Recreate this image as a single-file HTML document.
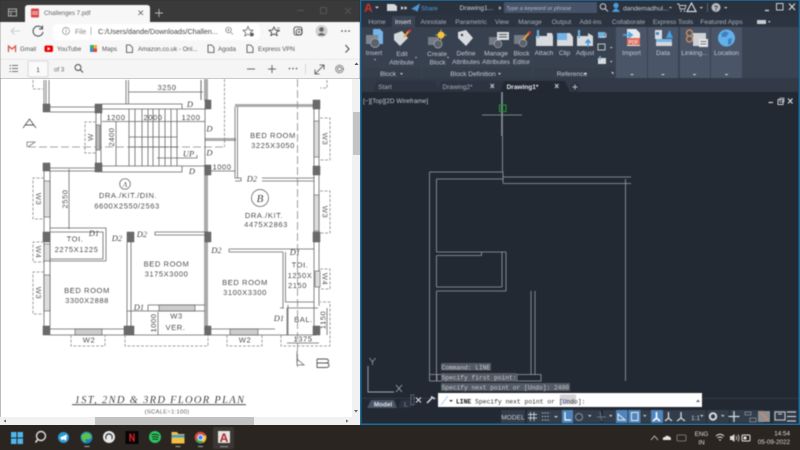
<!DOCTYPE html>
<html><head><meta charset="utf-8"><style>
html,body{margin:0;padding:0;width:800px;height:450px;overflow:hidden;background:#222933}
svg{display:block;font-family:"Liberation Sans",sans-serif}
.soft{filter:blur(.4px)}
.p text{font-size:7.6px;fill:#222;text-anchor:middle;letter-spacing:.55px;stroke:#fff;stroke-width:.1px}
.p text.i{font-family:"Liberation Serif",serif;font-style:italic;font-size:8.5px;letter-spacing:0}
.w{fill:none;stroke:#666;stroke-width:.8}
.g{fill:#aaa;stroke:none}
.c{fill:#6a6a6a;stroke:#444;stroke-width:.4}
.d{fill:none;stroke:#888;stroke-width:.8;stroke-dasharray:3 1.5}
.r text{font-size:6.6px;fill:#c4cad2;text-anchor:middle}
.t text{font-size:6.5px;fill:#a9b0ba;text-anchor:middle}
.l{fill:none;stroke:#9aa0a8;stroke-width:.8}
.b text{font-size:6.2px;fill:#555}
</style></head><body>
<svg width="800" height="450" viewBox="0 0 800 450" xmlns="http://www.w3.org/2000/svg">
<g class="soft">
<!-- BROWSER -->
<rect x="0" y="0" width="360" height="22" fill="#3a3a3a"/>
<path d="M25 22V8q0-3 3-3H147q3 0 3 3V22Z" fill="#f7f7f7"/>
<rect x="8.500" y="9" width="8" height="7" fill="none" stroke="#bbb" stroke-width=".9"/><path d="M8.500 11.500H16.500M11 11.500V16" stroke="#bbb" stroke-width=".8"/>
<rect x="31" y="8.500" width="8" height="9" rx="1" fill="#d84a4a"/><path d="M32 12H38M32 14H38" stroke="#fff" stroke-width=".7"/>
<text x="44" y="15" font-size="6.200" fill="#666">Challenges 7.pdf</text>
<path d="M138.500 10.500L143 15M143 10.500L138.500 15" stroke="#555" stroke-width=".8"/>
<path d="M155 13H163M159 9V17" stroke="#bbb" stroke-width=".9"/>
<path d="M297 10.500H304" stroke="#555"/><rect x="320.500" y="7.500" width="6" height="6" fill="none" stroke="#555"/><path d="M345 8L351 14M351 8L345 14" stroke="#555"/>
<rect x="0" y="22" width="360" height="21" fill="#f7f7f7"/>
<path d="M11 31H20M11 31L14.500 27.500M11 31L14.500 34.500" stroke="#ccc" fill="none"/>
<path d="M42 28A5 5 0 1 0 43 32M42.500 25.500V29H39" stroke="#444" fill="none"/>
<rect x="53" y="24" width="207" height="16" rx="4" fill="#fff"/>
<circle cx="66" cy="31" r="3.500" fill="none" stroke="#888" stroke-width=".7"/><path d="M66 30V33M66 28.800V29.500" stroke="#888" stroke-width=".7"/>
<text x="75" y="34" font-size="7" fill="#888">File</text><path d="M91 27V35" stroke="#888" stroke-width=".6"/>
<text x="98" y="34" font-size="7.200" fill="#444">C:/Users/dande/Downloads/Challen...</text>
<circle cx="228.500" cy="30" r="2.800" fill="none" stroke="#777" stroke-width=".7"/><path d="M231 32.500L233 34.500M227 30H230M228.500 28.500V31.500" stroke="#777" stroke-width=".6"/>
<path d="M248 26.500L249.500 30L253 30.300L250.300 32.500L251.200 36L248 34L244.800 36L245.700 32.500L243 30.300L246.500 30Z" fill="none" stroke="#555" stroke-width=".7"/><circle cx="252" cy="34.500" r="1.800" fill="#555"/>
<path d="M274 27L275.500 30L279 30.300L276.300 32.500L277.200 35.500L274 34L270.800 35.500L271.700 32.500L269 30.300L272.500 30Z" fill="none" stroke="#333" stroke-width=".8"/><path d="M277 28H280M277 31H280" stroke="#333" stroke-width=".6"/>
<rect x="294" y="27" width="8" height="8" rx="2" fill="none" stroke="#333" stroke-width=".8"/><circle cx="299" cy="32" r="3" fill="#f7f7f7" stroke="#333" stroke-width=".8"/><path d="M299 30.500V33.500M297.500 32H300.500" stroke="#333" stroke-width=".6"/>
<circle cx="321.500" cy="31" r="6" fill="#d0d0d0"/><circle cx="321.500" cy="29.500" r="2.300" fill="#666"/><path d="M317.500 35.500Q321.500 30.500 325.500 35.500Z" fill="#666"/>
<circle cx="342" cy="31" r=".8" fill="#333"/><circle cx="345.500" cy="31" r=".8" fill="#333"/><circle cx="349" cy="31" r=".8" fill="#333"/>
<rect x="0" y="43" width="360" height="16" fill="#f7f7f7"/>
<path d="M8.500 52V46L12 49L15.500 46V52" fill="none" stroke="#d9503f" stroke-width="1.300"/>
<rect x="44.500" y="45.500" width="8.500" height="6.500" rx="1.500" fill="#e00"/><path d="M47.500 47L50.500 48.700L47.500 50.500Z" fill="#fff"/>
<rect x="90" y="45" width="3.500" height="3.500" fill="#3a8"/><rect x="93.500" y="45" width="3.500" height="3.500" fill="#e8b030"/><rect x="90" y="48.500" width="3.500" height="3.500" fill="#48c"/><rect x="93.500" y="48.500" width="3.500" height="3.500" fill="#d44"/>
<path d="M126.500 45H130L132.500 47.500V52.500H126.500Z" fill="none" stroke="#444" stroke-width=".8"/>
<path d="M208 45H211.500L214 47.500V52.500H208Z" fill="none" stroke="#444" stroke-width=".8"/>
<path d="M247 45H250.500L253 47.500V52.500H247Z" fill="none" stroke="#444" stroke-width=".8"/>
<g class="b"><text x="20" y="51">Gmail</text><text x="57" y="51">YouTube</text><text x="102" y="51">Maps</text><text x="138" y="51">Amazon.co.uk - Onl...</text><text x="218" y="51">Agoda</text><text x="258" y="51">Express VPN</text></g>
<path d="M345.500 45L349 49L345.500 52.500" fill="none" stroke="#444"/>
<rect x="0" y="59" width="360" height="20" fill="#f5f5f5"/><rect x="0" y="59" width="360" height=".6" fill="#e2e2e2"/>
<path d="M12 65.500H18M12 68.500H18M12 71.500H18" stroke="#444" stroke-width=".8"/><path d="M9.500 65.500H11M9.500 68.500H11M9.500 71.500H11" stroke="#444" stroke-width=".8"/>
<rect x="28" y="61" width="20" height="16" rx="1.500" fill="#fafafa" stroke="#ccc" stroke-width=".7"/>
<text x="38" y="72" font-size="6.500" fill="#444" text-anchor="middle">1</text>
<text x="54" y="71.500" font-size="6.200" fill="#666">of 3</text>
<circle cx="78" cy="67.500" r="3" fill="none" stroke="#444" stroke-width=".9"/><path d="M80.200 69.700L83 72.500" stroke="#444"/>
<path d="M247 69H255" stroke="#666"/><path d="M268 69H276M272 65V73" stroke="#666"/>
<circle cx="289.500" cy="68.500" r=".8" fill="#444"/><circle cx="293" cy="68.500" r=".8" fill="#444"/><circle cx="296.500" cy="68.500" r=".8" fill="#444"/>
<path d="M305.500 64V74" stroke="#ccc" stroke-width=".7"/>
<path d="M315 74L323.500 65.500M319.500 65H324V69.500M315 69.500V74H319.500" fill="none" stroke="#444" stroke-width=".8"/>
<circle cx="339.500" cy="69" r="2" fill="none" stroke="#444" stroke-width=".7"/><circle cx="339.500" cy="69" r="3.800" fill="none" stroke="#444" stroke-width=".9" stroke-dasharray="1.500 .7"/>
</g>
<!-- PDF PAGE -->
<rect x="0" y="79" width="352" height="338" fill="#fff"/>
<rect x="0" y="79" width="1" height="346" fill="#bbb"/>
<g class="soft p">
<rect class="g" x="204" y="79" width="4" height="22"/><rect class="g" x="204" y="165" width="4" height="170"/>
<rect class="g" x="235" y="104" width="80" height="3"/><rect class="g" x="205" y="138" width="31" height="3"/>
<path class="d" d="M33 80V89H43M327 80V88H320M224.500 79V140M224.500 140V147"/>
<path class="d" d="M297.500 79V367M28 147H224" style="stroke-dasharray:8 3"/>
<path class="w" d="M44 80V106M49 80V106M46 80V106M126 80V104M128.500 80V104M201 80V100M50 107H96M50 112H96M102 104H182V109H102M102 109H205"/>
<path class="w" d="M129 92H203M201 80V100"/>
<path class="w" d="M129 109V166M135 109V166M142 109V166M148 109V166M153 109V166M159 109V166M165 109V166M171 109V166M177 109V166M129 137H177M129 147H177M102 121.500H205M116 121V166M157 158H197V155"/>
<path class="w" d="M96 113V163M101 113V163M102 166H205M102 172H182V166M50 168H95M50 171H95M205 109V166"/>
<rect x="96" y="125" width="4" height="25" fill="#bbb" stroke="#555" stroke-width=".6"/>
<path class="d" d="M96 122H85V153H96"/>
<path class="c" d="M43 104h7v8h-7zM95 104h7v9h-7zM205 100h6v9h-6zM95 163h7v9h-7zM43 163h7v8h-7zM205 165h6v10h-6zM313 100h7v9h-7zM313 166h7v9h-7zM313 232h7v10h-7zM43 232h7v10h-7zM127 232h7v10h-7zM43 326h7v9h-7zM124 326h10v9h-10zM205 326h6v9h-6zM313 326h7v9h-7zM205 232h6v10h-6z"/>
<path class="w" d="M235 107V178H241V181H235M237.500 107V178M262 178H314V181H262M314 109V166M319 109V166M314 175V232M319 175V232M314 242V326M319 242V306M211 171H235"/>
<path class="w" d="M208 232H155V235H208M44 171V326M50 171V326M50 228H106V261M50 232H103V259H50M106 261H50M127 242V326M131 242V326M50 329H124M50 335H316"/>
<path class="w" d="M69 169V229M229 249H314M229 252H283M229 249V252M283 252V308M285.500 252V302H314M288 305V335M318 308H287V335M280 308H284M275 329H204M148 305H205M148 311H205M127 311H148M148 305V311M158 312V335"/>
<rect x="159" y="305" width="36" height="6" fill="#ccc" stroke="#555" stroke-width=".6"/>
<rect x="75" y="329" width="27" height="6" fill="#ccc" stroke="#555" stroke-width=".6"/>
<rect x="230" y="329" width="28" height="6" fill="#ccc" stroke="#555" stroke-width=".6"/>
<rect x="44" y="181" width="6" height="36" fill="#ddd" stroke="#555" stroke-width=".6"/>
<rect x="44" y="275" width="6" height="36" fill="#ddd" stroke="#555" stroke-width=".6"/>
<rect x="44" y="244" width="6" height="17" fill="#ddd" stroke="#555" stroke-width=".6"/>
<rect x="314" y="121" width="5" height="36" fill="#ddd" stroke="#555" stroke-width=".6"/>
<rect x="314" y="195" width="5" height="36" fill="#ddd" stroke="#555" stroke-width=".6"/>
<rect x="315" y="271" width="5" height="16" fill="#ddd" stroke="#555" stroke-width=".6"/>
<path class="d" d="M320 118H330V160H320M320 191H330V233H320M320 269H330V289H320M44 178H33V219H44M44 242H33V262H44M44 272H33V314H44M71 335V346H105V335M125 335V346H208V335M227 335V346H262V335M281 335V346H330V302H320"/>
<path class="w" d="M287 343H319M327 308V335M297 351V365H304L297 359"/>
<path d="M23 128L29.500 119L36 128M25.500 125H33.500" fill="none" stroke="#555" stroke-width=".9"/>
<path d="M27 147V142H35L28 147" fill="none" stroke="#777" stroke-width=".8"/>
<path d="M317 359H326Q328.500 359 328.500 361Q328.500 363 326 363H317M326 363Q329 363 329 365Q329 367.500 326 367.500H317V359" fill="none" stroke="#555" stroke-width=".9"/>
<circle cx="125" cy="184" r="5.300" fill="none" stroke="#555" stroke-width=".7"/>
<circle cx="260" cy="198" r="8.500" fill="none" stroke="#555" stroke-width=".7"/>
<text x="167" y="90">3250</text><text x="116" y="120">1200</text><text x="153" y="120">2000</text><text x="191" y="120">1200</text><text x="222" y="169.500">1000</text>
<text x="273" y="138">BED ROOM</text><text x="273" y="148">3225X3050</text>
<text x="128" y="198">DRA./KIT./DIN.</text><text x="127" y="208.500">6600X2550/2563</text>
<text x="264" y="218">DRA./KIT.</text><text x="266" y="227">4475X2863</text>
<text x="75" y="241.500">TOI.</text><text x="76.500" y="252">2275X1225</text>
<text x="166.500" y="266.500">BED ROOM</text><text x="166.500" y="276.500">3175X3000</text>
<text x="245" y="285">BED ROOM</text><text x="245" y="295">3100X3300</text>
<text x="87" y="293">BED ROOM</text><text x="87" y="303">3300X2888</text>
<text x="300" y="267.500">TOI.</text><text x="300" y="278">1250X</text><text x="297.500" y="288">2150</text>
<text x="303.500" y="322">BAL.</text><text x="176.500" y="318.500">W3</text><text x="175.500" y="330">VER.</text>
<text x="89" y="342.500">W2</text><text x="245" y="342.500">W2</text><text x="303" y="341.500">1375</text>
<g style="font-size:7px"><text transform="translate(114,137) rotate(-90)">2400</text><text transform="translate(67.500,199) rotate(-90)">2550</text><text transform="translate(156,323) rotate(-90)">1000</text><text transform="translate(325.500,320) rotate(-90)">1150</text></g>
<text transform="translate(93,137) rotate(-90)">W</text>
<text transform="translate(36,199) rotate(90)">W3</text><text transform="translate(36,293) rotate(90)">W3</text><text transform="translate(36,252) rotate(90)">W4</text>
<text transform="translate(322.500,139) rotate(90)">W3</text><text transform="translate(322.500,212) rotate(90)">W3</text><text transform="translate(322.500,279) rotate(90)">W4</text>
<text class="i" x="190" y="107">D</text><text class="i" x="209.500" y="131.500">D</text><text class="i" x="209.500" y="155.500">D</text><text class="i" x="192" y="174">D</text><text class="i" x="188.500" y="156.500">UP</text>
<text class="i" x="125" y="187" style="font-size:7px">A</text><text class="i" x="260" y="202" style="font-size:11px">B</text>
<text class="i" x="252" y="181.500">D2</text><text class="i" x="94" y="236">D1</text><text class="i" x="117" y="241">D2</text><text class="i" x="142" y="237">D2</text><text class="i" x="216.500" y="253">D2</text><text class="i" x="295" y="255">D1</text><text class="i" x="139" y="310">D1</text><text class="i" x="279" y="321">D1</text>
<text x="160" y="403" style="font-family:'Liberation Serif',serif;font-style:italic;font-size:10.500px;letter-spacing:1.300px">1ST,  2ND  &amp;  3RD  FLOOR  PLAN</text>
<path d="M72 404.700H246" stroke="#333" stroke-width=".9"/>
<text x="167" y="413.500" style="font-size:5.800px;letter-spacing:.3px">(SCALE=1:100)</text>
</g>
<!-- scrollbars -->
<rect x="352" y="79" width="8" height="346" fill="#f1f1f1"/>
<rect x="353" y="112" width="7" height="43" fill="#c4c4c4"/>
<path d="M354.500 65L356.500 62.500L358.500 65Z" fill="#555"/><path d="M354 410L356 412.500L358 410Z" fill="#666"/>
<rect x="0" y="417" width="352" height="8" fill="#f1f1f1"/><rect x="95" y="417" width="159" height="8" fill="#c2c2c2"/>
<path d="M6 419.500L3.500 421L6 422.500Z" fill="#666"/><path d="M346 419.500L348.500 421L346 422.500Z" fill="#666"/>
<!-- AUTOCAD -->
<rect x="360" y="0" width="440" height="425" fill="#222933"/>
<rect x="360" y="0" width="1.500" height="425" fill="#1b6d9e"/><rect x="360" y="423.500" width="440" height="1.500" fill="#1b6d9e"/><rect x="360" y="0" width="440" height="1" fill="#1b6d9e"/><rect x="798.500" y="0" width="1.500" height="425" fill="#1b6d9e"/>
<g class="soft">
<rect x="361.500" y="1" width="437" height="14" fill="#2a323e"/>
<text x="364" y="12" font-size="12" font-weight="bold" fill="#c8352c">A</text>
<path d="M375 6.500H379L377 8.800Z" fill="#ccc"/>
<path d="M387 4H394L397 6V11H387Z" fill="#d5d8dc"/>
<path d="M401 6L404 8L401 10ZM404.500 6L407.500 8L404.500 10Z" fill="#ccc"/>
<path d="M411 9L420 3.500L417.500 12L415 9.500L414 12V9.500Z" fill="#4d9ad8"/>
<text x="421" y="10.300" font-size="6.300" fill="#4d9ad8">Share</text>
<text x="459.500" y="10" font-size="6.700" fill="#cfd3d9">Drawing1...</text>
<path d="M499 6L501.500 8L499 10Z" fill="#bbb"/>
<rect x="504" y="2" width="93" height="11" fill="#465369"/>
<text x="506" y="10" font-size="5.700" font-style="italic" fill="#b6bcc6">Type a keyword or phrase</text>
<circle cx="603" cy="6.500" r="2.800" fill="none" stroke="#ccc"/><path d="M605 8.500L608 11.500" stroke="#ccc" stroke-width="1.100"/>
<circle cx="616" cy="5.500" r="2.700" fill="#4d9ad8"/><path d="M612 12Q616 5 620 12Z" fill="#4d9ad8"/>
<text x="623" y="10.300" font-size="6.600" fill="#c9cdd3">dandemadhul...</text>
<path d="M669 7H672L670.500 8.500Z" fill="#ccc"/>
<path d="M677 4H679L680 9H685L686 5.500H680" fill="none" stroke="#ccc" stroke-width=".9"/><circle cx="681" cy="11" r=".8" fill="#ccc"/><circle cx="684.500" cy="11" r=".8" fill="#ccc"/>
<path d="M691.500 3L696 11.500H687Z" fill="none" stroke="#d5d8dc" stroke-width="1.200"/>
<path d="M699.500 7H703L701.300 8.800Z" fill="#ccc"/><path d="M707.500 3V12" stroke="#5a6472"/>
<circle cx="716" cy="7.500" r="4.500" fill="#b8bcc2"/><text x="716" y="10.300" font-size="7" font-weight="bold" fill="#2a323e" text-anchor="middle">?</text>
<path d="M724 7H727.500L725.800 8.800Z" fill="#ccc"/>
<path d="M765 10.500H769" stroke="#ddd" stroke-width="1.300"/><rect x="776.500" y="3.500" width="6.500" height="6.500" fill="none" stroke="#ddd" stroke-width=".9"/><path d="M789 3.500L795 10M795 3.500L789 10" stroke="#ddd" stroke-width="1.100"/>
<!-- ribbon tabs -->
<rect x="361.500" y="15" width="437" height="12" fill="#2c3441"/>
<rect x="392" y="16" width="23" height="11" fill="#3b4453"/>
<g class="t"><text x="377" y="24">Home</text><text x="403" y="24" style="fill:#e4e7ea">Insert</text><text x="433.500" y="24">Annotate</text><text x="471" y="24">Parametric</text><text x="502" y="24">View</text><text x="530" y="24">Manage</text><text x="561.500" y="24">Output</text><text x="590.500" y="24">Add-ins</text><text x="628.500" y="24">Collaborate</text><text x="673" y="24">Express Tools</text><text x="721.500" y="24">Featured Apps</text></g>
<rect x="757" y="20" width="9" height="4" fill="#c8cbd0"/><path d="M768 21H770.500L769.200 23Z" fill="#ccc"/>
<!-- ribbon -->
<rect x="361.500" y="27" width="437" height="51" fill="#3a4351"/>
<rect x="363" y="27" width="58" height="51" fill="#38414f"/><rect x="421.500" y="27" width="110.500" height="51" fill="#38414f"/><rect x="533" y="27" width="82" height="51" fill="#38414f"/>
<rect x="363" y="68" width="58" height="10" fill="#353e4b"/><rect x="423" y="68" width="109" height="10" fill="#353e4b"/><rect x="533" y="68" width="82" height="10" fill="#353e4b"/>
<rect x="616" y="27" width="31" height="51" fill="#4a5568"/><rect x="648" y="27" width="30" height="51" fill="#4a5568"/><rect x="680" y="27" width="30" height="51" fill="#4a5568"/><rect x="711" y="27" width="31" height="51" fill="#4a5568"/>
<!-- ribbon icons -->
<path d="M373 29H380L383 32V44H373Z" fill="#74b4e8"/>
<rect x="366" y="35" width="12" height="9" fill="#7e858e"/><circle cx="375" cy="43" r="4.500" fill="#5b626c" stroke="#aab0b8" stroke-width=".7"/>
<path d="M394 34L402 31L408 38L400 46L394 40Z" fill="#d4d7db"/><path d="M404 37L409 31" stroke="#f0a030" stroke-width="1.800"/><circle cx="409.500" cy="31" r="1.500" fill="#e33"/>
<rect x="428" y="37" width="11" height="8" fill="#747b85"/><circle cx="438" cy="44" r="4" fill="#5b626c" stroke="#aab0b8" stroke-width=".7"/><circle cx="441" cy="35" r="3.500" fill="#f5c542"/><path d="M441 29.500V40.500M435.500 35H446.500" stroke="#f5c542" stroke-width=".7"/>
<path d="M458 32L466 30L473 38L466 46L458 38Z" fill="#d8dbdf"/><circle cx="462" cy="35" r="1.200" fill="#38414f"/>
<rect x="489" y="37" width="11" height="8" fill="#747b85"/><circle cx="498" cy="44" r="3.800" fill="#5b626c" stroke="#aab0b8" stroke-width=".7"/><rect x="497" y="32" width="12" height="8" fill="#d8dbdf"/><path d="M499 34.500H507M499 37H507" stroke="#555"/>
<rect x="514" y="35" width="12" height="9" fill="#747b85"/><circle cx="523" cy="43" r="3.800" fill="#5b626c" stroke="#aab0b8" stroke-width=".7"/><path d="M523 40L529 33" stroke="#f0a030" stroke-width="1.800"/><circle cx="529.500" cy="32.500" r="1.400" fill="#e33"/>
<path d="M536 36H547V33H552L553 36V46H536Z" fill="#d7dade"/><path d="M538 30V38" stroke="#6fb0e0" stroke-width="2.200"/>
<path d="M557 33H570L573 37V46H557Z" fill="#d7dade"/><rect x="557" y="33" width="10" height="7" fill="#72b3e8"/>
<path d="M577 36H588V33L593 36V46H577Z" fill="#d7dade"/><path d="M579 30V38" stroke="#6fb0e0" stroke-width="2.200"/><path d="M588 47V41M585.500 43L588 40L590.500 43" stroke="#3f93d8" stroke-width="1.400" fill="none"/>
<path d="M598 32H605V38H598Z" fill="#73b0e0"/><path d="M600 37H606V33" stroke="#c9cdd2" fill="none"/>
<rect x="598" y="44" width="7" height="6" fill="none" stroke="#c0c5cb"/>
<rect x="598" y="58" width="8" height="6" fill="#d7dade"/><path d="M600 56V60" stroke="#6fb0e0" stroke-width="1.500"/>
<path d="M610 47H612.500L611.200 48.500ZM610 61H612.500L611.200 62.500Z" fill="#ddd"/>
<path d="M627 29H636L640 33V46H627Z" fill="#e8e8ea"/><rect x="627" y="38" width="13" height="7" fill="#e16a5a"/><path d="M623 35H631M628 32L632 35L628 38" stroke="#4ba4e6" stroke-width="1.700" fill="none"/>
<text x="633.500" y="44" font-size="5" fill="#fff" text-anchor="middle">PDF</text>
<rect x="655" y="30" width="7" height="9" fill="#d9dce0"/><rect x="656" y="32" width="3" height="3" fill="#4c88c0"/><path d="M669.500 30L673 38H666Z" fill="#4b9ee0"/><rect x="656" y="39" width="16" height="3" fill="#74b4e8"/><rect x="656" y="42" width="16" height="4" fill="#d4d7db"/>
<rect x="693" y="33" width="13" height="13" fill="#cfd2d6"/><rect x="699" y="39" width="9" height="8" fill="#e4e6e9"/><path d="M700.500 41.500H706.500M700.500 44H706.500" stroke="#555" stroke-width=".7"/>
<circle cx="689.500" cy="33" r="3" fill="none" stroke="#c58b62" stroke-width="1.500"/><circle cx="689.500" cy="39" r="3" fill="none" stroke="#c58b62" stroke-width="1.500"/>
<circle cx="726.500" cy="38" r="8.500" fill="#63b1ea"/><path d="M721 34L725 31L729 33L726 37L722 37ZM728 39L732 38L731 44L728 45Z" fill="#3e83bf"/>
<g class="r">
<text x="374" y="55">Insert</text><text x="402" y="56">Edit</text><text x="401.500" y="64.500">Attribute</text>
<text x="437" y="56">Create</text><text x="437.500" y="64.500">Block</text><text x="466" y="55.500">Define</text><text x="466" y="64">Attributes</text><text x="496" y="55.500">Manage</text><text x="496" y="64">Attributes</text><text x="521.500" y="55.500">Block</text><text x="521.500" y="64">Editor</text>
<text x="544" y="55">Attach</text><text x="564.500" y="55">Clip</text><text x="585" y="55">Adjust</text>
<text x="631.500" y="55">Import</text><text x="663" y="55">Data</text><text x="694.500" y="55">Linking...</text><text x="726.500" y="55">Location</text>
<text x="388" y="76">Block</text><text x="473" y="76">Block Definition</text><text x="572" y="76">Reference</text>
</g>
<path d="M374 59H376L375 60.500ZM415 57H417L416 58.500ZM447 57H449L448 58.500ZM400 73H403L401.500 75ZM498 73H501L499.500 75ZM584 73H587L585.500 75ZM630 74H634L632 75.500ZM661 74H665L663 75.500ZM692.500 74H696.500L694.500 75.500ZM724.500 74H728.500L726.500 75.500ZM611 72H613.500V74.500Z" fill="#ccd0d5"/>
<!-- file tabs -->
<rect x="361.500" y="78" width="437" height="14" fill="#323a47"/>
<path d="M373 92L377 81H435L439 92Z" fill="#2c3441"/>
<path d="M437 92L441 81H503L507 92Z" fill="#2c3441"/>
<path d="M500 92L504 81H565L570 92Z" fill="#222933"/>
<g class="t"><text x="385" y="89">Start</text><text x="457.500" y="89">Drawing2*</text><text x="522.500" y="89" style="fill:#e3e6ea;font-weight:bold">Drawing1*</text></g>
<path d="M490.500 84L494 88M494 84L490.500 88M555 84L558.500 88M558.500 84L555 88" stroke="#c6cad0"/>
<circle cx="575" cy="87" r="5" fill="#2c3441"/><path d="M572.500 87H577.500M575 84.500V89.500" stroke="#bbb"/>
<!-- viewport labels -->
<text x="363" y="103" font-size="6.500" fill="#c4c8ce">[−][Top][2D Wireframe]</text>
<path d="M768.500 102.500H773" stroke="#c9cdd2" stroke-width="1.200"/><rect x="778" y="99.500" width="5" height="5" fill="none" stroke="#c9cdd2"/><rect x="780" y="98" width="4" height="4" fill="none" stroke="#c9cdd2" stroke-width=".7"/><path d="M788 98.500L792.500 103.500M792.500 98.500L788 103.500" stroke="#ddd" stroke-width="1.100"/>
<!-- drawing -->
<path class="l" d="M482 115H522M502.500 136V172M429.500 172H503M429.500 172V381M436.500 179H503M436.500 179V252M503 172V183M503 177H631M503 183.500H631M625.500 179V381M436.500 252H506M436.500 255.500H481.500V252M436.500 255.500V287M502 252V287M436.500 287H502M506 252V291M436.500 291H506M436.500 291V381M531 291V375M535 291V375M429.500 374.500H541V381H429.500M437 374.500V381M517 374.500V381"/>
<path d="M502 92V136" stroke="#8e949c" stroke-width="1.600"/>
<rect x="499.500" y="105" width="6.500" height="6.500" fill="none" stroke="#1a9a2a" stroke-width="1.100"/>
<path d="M368 366V392H394" fill="none" stroke="#a5abb3" stroke-width=".9"/>
<path d="M369.500 358L372.500 362L375.500 358M372.500 362V365" fill="none" stroke="#9aa0a8" stroke-width=".8"/><path d="M396 385L402 392M402 385L396 392" stroke="#9aa0a8" stroke-width=".9"/>
<!-- command -->
<rect x="441" y="363" width="50" height="7.500" fill="#555b64"/><rect x="441" y="373" width="76" height="8" fill="#555b64"/><rect x="441" y="383" width="129" height="8" fill="#555b64"/>
<g font-family="Liberation Mono" font-size="6.250" fill="#c8ccd1"><text x="441.500" y="369.300">Command: LINE</text><text x="441.500" y="379.500">Specify first point:</text><text x="441.500" y="389.500">Specify next point or [Undo]: 2400</text></g>
<rect x="361.500" y="398" width="437" height=".7" fill="#3a4351"/>
<path d="M367 408L371 400H394L397 408Z" fill="#4a5568"/><text x="383" y="406.500" font-size="6.300" font-weight="bold" fill="#dfe2e6" text-anchor="middle">Model</text>
<path d="M398 408L401 400H411V408Z" fill="#2c3441"/><text x="404" y="406.500" font-size="6.500" fill="#8c929b">L</text>
<rect x="411" y="395" width="3" height="10" fill="none" stroke="#8c929b" stroke-width=".8" stroke-dasharray="1.500 .8"/>
<path d="M416 397.500L421 402.500M421 397.500L416 402.500" stroke="#ddd" stroke-width="1.100"/>
<path d="M427 403L433 397M431 396.500L435 399" stroke="#ddd" stroke-width="1.500" fill="none"/>
<rect x="438" y="393" width="264" height="14" fill="#fff"/>
<path d="M441 405L448 396" stroke="#9cc4ea" stroke-width=".8"/><path d="M449 400H453L451 402Z" fill="#333"/>
<rect x="560" y="394.500" width="16" height="10" fill="#d4d4d6"/>
<text x="456" y="403.500" font-size="6.350" font-family="Liberation Mono" fill="#333"><tspan font-weight="bold" fill="#111">LINE</tspan> Specify next point or [<tspan fill="#3b3bc0">U</tspan>ndo]:</text>
<path d="M696 402L698 399.500L700 402Z" fill="#666"/>
<!-- status bar -->
<rect x="501" y="410" width="24" height="13" fill="#333c49"/><text x="513" y="419.500" font-size="6.600" fill="#c9cdd2" text-anchor="middle">MODEL</text>
<rect x="527" y="410" width="74" height="13" fill="#333c49"/><rect x="603" y="410" width="54" height="13" fill="#333c49"/><rect x="660" y="410" width="46" height="13" fill="#333c49"/><rect x="707" y="410" width="22" height="13" fill="#333c49"/>
<rect x="730" y="410" width="34" height="13" fill="#333c49"/><rect x="773" y="410" width="24" height="13" fill="#333c49"/>
<rect x="562" y="410" width="11" height="13" fill="#4f86bd"/><rect x="616" y="410" width="11.500" height="13" fill="#4f86bd"/><rect x="628.500" y="410" width="12" height="13" fill="#4f86bd"/><rect x="651" y="410" width="12" height="13" fill="#4f86bd"/>
<path d="M530.500 412V421M534 412V421M528 414.500H537M528 418H537" stroke="#c9cdd2" stroke-width=".9"/>
<path d="M542 413H550M542 416.500H550M542 420H550" stroke="#c9cdd2" stroke-width="1.100" stroke-dasharray="1.300 1.300"/>
<path d="M554 416H558L556 418Z" fill="#ccc"/><path d="M565 412V420H571" stroke="#fff" fill="none" stroke-width="1.200"/>
<circle cx="579" cy="417" r="3.500" fill="none" stroke="#8c929b"/><path d="M588 415H591.500L589.800 417Z" fill="#ccc"/>
<path d="M600 412L602 421M597 417H606" stroke="#6e7580"/><path d="M609 415H612.500L610.800 417Z" fill="#ccc"/>
<path d="M618 420H625L618 414Z" fill="none" stroke="#e8eaed"/><rect x="631.500" y="412.500" width="6.500" height="8" fill="none" stroke="#e8eaed"/><path d="M643 415H646.500L644.800 417Z" fill="#ccc"/>
<path d="M656.500 412V418L653 421M656.500 418L660 421" stroke="#fff" stroke-width="1.600" fill="none"/>
<path d="M668.500 412V418L665 421M668.500 418L672 421" stroke="#d0d3d8" stroke-width="1.400" fill="none"/><path d="M681 412V418L677 421M681 418L685 421" stroke="#d0d3d8" stroke-width="1.400" fill="none"/>
<text x="691" y="420" font-size="6.500" fill="#ccd0d5">1:1</text><path d="M700 415H703.500L701.800 417Z" fill="#ccc"/>
<circle cx="713" cy="416.500" r="3.200" fill="none" stroke="#d8dbdf" stroke-width="2"/><path d="M721 415H724.500L722.800 417Z" fill="#ccc"/>
<path d="M734 411V422M728.500 416.500H739.500" stroke="#d8dbdf" stroke-width="1.300"/>
<path d="M745 412H751V415H745ZM750 418H756V422H750Z" fill="none" stroke="#8c929b" stroke-width=".8"/>
<rect x="758" y="411" width="12" height="11" fill="#8d8f92"/><path d="M760 412L768 420" stroke="#d08a60" stroke-width="1.500"/>
<rect x="775" y="412" width="10" height="8" fill="none" stroke="#ccd0d5"/><path d="M778 414H782" stroke="#ccd0d5"/>
<path d="M787 412H796M787 416.500H796M787 421H796" stroke="#dfe2e6" stroke-width="1.100"/>
</g>
<!-- TASKBAR -->
<rect x="0" y="425" width="800" height="25" fill="#2a2521"/>
<g class="soft">
<rect x="213" y="427" width="21" height="22" rx="2" fill="#3b3733"/>
<path d="M11 432H16.500V437.500H11ZM17.500 432H23V437.500H17.500ZM11 438.500H16.500V444H11ZM17.500 438.500H23V444H17.500Z" fill="#4cb8ef"/>
<circle cx="41" cy="436" r="4.500" fill="none" stroke="#dde0e3" stroke-width="1.400"/><path d="M37.800 439.500L35.500 442.500" stroke="#dde0e3" stroke-width="1.600"/>
<circle cx="63.500" cy="437.500" r="5.500" fill="#2a9ad6"/><path d="M60 437.500L67 434.500L66 441L63.500 439L62 440.500Z" fill="#fff"/>
<circle cx="86.500" cy="437.500" r="6" fill="#1a7fc9"/><path d="M81 436Q86 430 91 435Q92.500 439 88 439.500Q84 438 86 443Q82 441.500 81 436Z" fill="#5dc24a"/>
<rect x="84.500" y="446" width="5" height="1" fill="#aaa"/>
<circle cx="109" cy="437" r="6" fill="#e8e8e8"/><circle cx="109" cy="437" r="3.800" fill="#333"/><path d="M106.500 441V436Q109 433 111.500 436V441Z" fill="#e8e8e8"/>
<rect x="125.500" y="431" width="13" height="13" fill="#050505"/><path d="M130 433.500V441.500M134 433.500V441.500M130 433.500L134 441.500" stroke="#d81f26" stroke-width="1.300"/>
<circle cx="155" cy="437" r="6" fill="#2cc45f"/><path d="M151.500 435Q155.500 433.500 159 435.500M152 437.200Q155.500 436 158.500 437.800M152.500 439.300Q155.500 438.300 158 439.800" stroke="#1a1a1a" stroke-width=".9" fill="none"/>
<path d="M171.500 432H177L178.500 434H184.500V443.500H171.500Z" fill="#f0c040"/><rect x="171.500" y="435" width="13" height="2.500" fill="#3f9bd8"/>
<rect x="175.500" y="446" width="5" height="1" fill="#aaa"/>
<circle cx="200.500" cy="437.500" r="5.800" fill="#d8503f"/><path d="M200.500 437.500L195.500 440.500A5.800 5.800 0 0 0 203 442.800Z" fill="#3aa757"/><path d="M200.500 437.500L203 442.800A5.800 5.800 0 0 0 205.800 435Z" fill="#f4c430"/><circle cx="200.500" cy="437.500" r="2.700" fill="#4285f4" stroke="#fff" stroke-width=".9"/>
<rect x="198" y="446" width="5" height="1" fill="#aaa"/>
<rect x="218" y="431" width="12" height="12" fill="#e7e2de"/><text x="224" y="442" font-size="12" font-weight="bold" fill="#a8262d" text-anchor="middle">A</text>
<rect x="220" y="446" width="8" height="1.200" fill="#888"/>
<path d="M651 440L654.500 436L658 440" fill="none" stroke="#ccc" stroke-width=".9"/>
<path d="M663 440Q662 437 665 437Q666.500 434.500 669 436.500Q671 436.500 671 440Z" fill="#e5e5e5"/>
<rect x="677" y="435" width="9" height="6" rx="1" fill="none" stroke="#8a8a8a" stroke-width=".8"/>
<text x="701.500" y="436" font-size="6.300" fill="#ddd" text-anchor="middle">ENG</text><text x="701.500" y="444.500" font-size="6.300" fill="#ddd" text-anchor="middle">IN</text>
<path d="M716 436Q720 432.500 724 436M717.500 438Q720 436 722.500 438" stroke="#e5e5e5" fill="none"/><path d="M718.700 439.500L720 441L721.300 439.500Z" fill="#e5e5e5"/>
<path d="M730 436H732L734.500 434V442L732 440H730Z" fill="#ddd"/><path d="M736 436Q737.500 438 736 440M738 434.500Q740 438 738 441.500" stroke="#ddd" fill="none" stroke-width=".8"/>
<rect x="742" y="435" width="8" height="6" rx="1" fill="none" stroke="#e5e5e5"/><rect x="743.500" y="436.500" width="3" height="3" fill="#e5e5e5"/>
<text x="790" y="435.500" font-size="6.300" fill="#ddd" text-anchor="end">14:54</text><text x="790" y="444" font-size="6.300" fill="#ddd" text-anchor="end">05-09-2022</text>
</g>
</svg>
</body></html>
